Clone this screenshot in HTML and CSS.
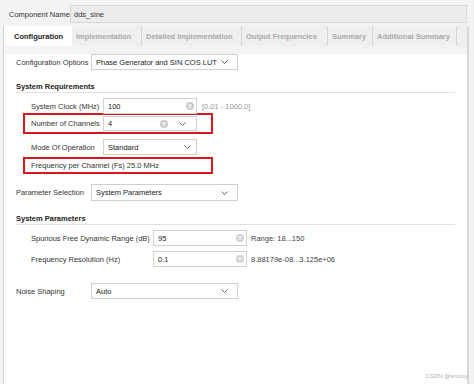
FILE: index.html
```html
<!DOCTYPE html>
<html lang="en">
<head>
    <meta charset="UTF-8">
    <meta name="viewport" content="width=device-width, initial-scale=1.0">
    <title>Component Configuration - dds_sine</title>
    <link rel="stylesheet" href="styles.css">
</head>
<body>
    <div class="top">
        <span class="top-label">Component Name</span>
        <div class="name-box">dds_sine</div>
    </div>

    <div class="tabwrap">
        <div class="tabs">
            <div class="tab active w-config">Configuration</div>
            <div class="tab w-impl">Implementation</div>
            <div class="tab w-detail">Detailed Implementation</div>
            <div class="tab w-output">Output Frequencies</div>
            <div class="tab w-summary">Summary</div>
            <div class="tab w-extra">Additional Summary</div>
        </div>

        <div class="panel">
            <div class="row lvl1 mt-config">
                <span class="lbl w1">Configuration Options</span>
                <div class="field f-wide">
                    <span class="val">Phase Generator and SIN COS LUT</span>
                    <svg class="chev" width="7" height="4" viewBox="0 0 7 4"><polyline points="0.5,0.5 3.5,3.5 6.5,0.5" fill="none" stroke="#666" stroke-width="1"/></svg>
                </div>
            </div>

            <div class="heading mt-req">System Requirements</div>

            <div class="row lvl2 mt-clock">
                <span class="lbl w2">System Clock (MHz)</span>
                <div class="field f-narrow">
                    <span class="val">100</span>
                    <svg class="clear" width="8" height="8" viewBox="0 0 8 8"><circle cx="4" cy="4" r="4" fill="#c9c9c9"/><path d="M2.5 2.5 L5.5 5.5 M5.5 2.5 L2.5 5.5" stroke="#fff" stroke-width="1.1"/></svg>
                </div>
                <span class="hint light">[0.01 - 1000.0]</span>
            </div>

            <div class="mark mark-chan">
                <div class="row inner">
                    <span class="lbl w2">Number of Channels</span>
                    <div class="field f-narrow">
                        <span class="val">4</span>
                        <svg class="clear gap" width="8" height="8" viewBox="0 0 8 8"><circle cx="4" cy="4" r="4" fill="#c9c9c9"/><path d="M2.5 2.5 L5.5 5.5 M5.5 2.5 L2.5 5.5" stroke="#fff" stroke-width="1.1"/></svg>
                        <svg class="chev" width="7" height="4" viewBox="0 0 7 4"><polyline points="0.5,0.5 3.5,3.5 6.5,0.5" fill="none" stroke="#666" stroke-width="1"/></svg>
                    </div>
                </div>
            </div>

            <div class="row lvl2 mt-mode">
                <span class="lbl w2">Mode Of Operation</span>
                <div class="field f-narrow">
                    <span class="val">Standard</span>
                    <svg class="chev" width="7" height="4" viewBox="0 0 7 4"><polyline points="0.5,0.5 3.5,3.5 6.5,0.5" fill="none" stroke="#666" stroke-width="1"/></svg>
                </div>
            </div>

            <div class="mark mark-fs">
                <div class="row inner-fs">Frequency per Channel (Fs) 25.0 MHz</div>
            </div>

            <div class="row lvl1 mt-param">
                <span class="lbl w1">Parameter Selection</span>
                <div class="field f-wide tall">
                    <span class="val">System Parameters</span>
                    <svg class="chev" width="7" height="4" viewBox="0 0 7 4"><polyline points="0.5,0.5 3.5,3.5 6.5,0.5" fill="none" stroke="#666" stroke-width="1"/></svg>
                </div>
            </div>

            <div class="heading mt-sys">System Parameters</div>

            <div class="row lvl2 mt-spur">
                <span class="lbl w3">Spurious Free Dynamic Range (dB)</span>
                <div class="field f-narrow">
                    <span class="val">95</span>
                    <svg class="clear" width="8" height="8" viewBox="0 0 8 8"><circle cx="4" cy="4" r="4" fill="#d2d2d2"/><path d="M2.5 2.5 L5.5 5.5 M5.5 2.5 L2.5 5.5" stroke="#fff" stroke-width="1.1"/></svg>
                </div>
                <span class="hint">Range: 18...150</span>
            </div>

            <div class="row lvl2 mt-res">
                <span class="lbl w3">Frequency Resolution (Hz)</span>
                <div class="field f-narrow">
                    <span class="val">0.1</span>
                    <svg class="clear" width="8" height="8" viewBox="0 0 8 8"><circle cx="4" cy="4" r="4" fill="#d2d2d2"/><path d="M2.5 2.5 L5.5 5.5 M5.5 2.5 L2.5 5.5" stroke="#fff" stroke-width="1.1"/></svg>
                </div>
                <span class="hint">8.88179e-08...3.125e+06</span>
            </div>

            <div class="row lvl1 mt-noise">
                <span class="lbl w1">Noise Shaping</span>
                <div class="field f-wide">
                    <span class="val">Auto</span>
                    <svg class="chev" width="7" height="4" viewBox="0 0 7 4"><polyline points="0.5,0.5 3.5,3.5 6.5,0.5" fill="none" stroke="#666" stroke-width="1"/></svg>
                </div>
            </div>
        </div>
    </div>

    <div class="watermark">CSDN @snutoy</div>
</body>
</html>
```

FILE: styles.css
```css
body {
    font-family: "Liberation Sans", Arial, sans-serif;
    font-size: 7.5px;
    color: #333;
    margin: 0;
    padding: 0;
    width: 474px;
    height: 384px;
    background-color: #f3f3f3;
    position: relative;
    overflow: hidden;
}
.top {
    display: flex;
    align-items: center;
    height: 18px;
    padding: 5px 0 0 9px;
}
.top-label {
    width: 61px;
}
.name-box {
    width: 397px;
    height: 18px;
    box-sizing: border-box;
    display: flex;
    align-items: center;
    padding-left: 3px;
    border: 1px solid #d8d8d8;
    background-color: #ececec;
}
.tabwrap {
    margin: 3px 0 0 3px;
    width: 466px;
    box-sizing: border-box;
    border: 1px solid #d4d4d4;
    border-top: none;
    border-right: 2px solid #d8d8d8;
}
.tabs {
    display: flex;
    height: 20px;
    background-color: #efefef;
}
.tab {
    display: flex;
    align-items: center;
    box-sizing: border-box;
    padding-left: 4px;
    border-right: 1px solid #d3d3d3;
    font-weight: bold;
    color: #a9a9a9;
    white-space: nowrap;
}
.tab.active {
    background-color: #fff;
    color: #222;
    padding-left: 10px;
    border-right: none;
}
.w-config { width: 68px; }
.w-impl { width: 70px; }
.w-detail { width: 100px; }
.w-output { width: 86px; }
.w-summary { width: 45px; }
.w-extra { width: 84px; }
.panel {
    background-color: #fff;
    height: 331px;
}
.row {
    display: flex;
    align-items: center;
    height: 16px;
    white-space: nowrap;
}
.lvl1 { padding-left: 12px; }
.lvl2 { padding-left: 27px; }
.lbl { flex-shrink: 0; }
.w1 { width: 75px; }
.w2 { width: 72px; }
.w3 { width: 122px; }
.field {
    display: flex;
    align-items: center;
    box-sizing: border-box;
    height: 16px;
    padding: 0 2px 0 4px;
    border: 1px solid #d0d0d0;
    background-color: #fff;
    color: #222;
}
.field .val {
    flex: 1;
}
.f-wide {
    width: 147px;
    padding-right: 6px;
}
.f-narrow { width: 94px; }
.tall { height: 17px; }
.chev { margin-right: 3px; }
.clear.gap { margin-right: 11px; }
.hint {
    margin-left: 4px;
    color: #444;
}
.hint.light {
    margin-left: 5px;
    color: #9a9a9a;
}
.heading {
    margin: 0 12px;
    height: 11px;
    line-height: 11px;
    border-bottom: 1px solid #e2e2e2;
    font-weight: bold;
    color: #222;
}
.mark {
    margin-left: 19px;
    width: 190px;
    box-sizing: border-box;
    border: 2px solid #d9161c;
    padding-left: 6px;
}
.mark .inner {
    height: 17px;
}
.mark .inner .field {
    height: 15px;
    padding-right: 7px;
}
.inner-fs {
    height: 13px;
}
.mt-config { margin-top: 8px; }
.mt-req { margin-top: 11px; }
.mt-clock { margin-top: 5px; }
.mark-chan { margin-top: -1px; }
.mt-mode { margin-top: 5px; }
.mark-fs { margin-top: 2px; }
.mt-param { margin-top: 10px; height: 17px; }
.mt-sys { margin-top: 12px; }
.mt-spur { margin-top: 5px; }
.mt-res { margin-top: 5px; }
.mt-noise { margin-top: 16px; }
.watermark {
    position: absolute;
    right: 6px;
    bottom: 5px;
    font-size: 6px;
    color: #b0b0b0;
}
```
